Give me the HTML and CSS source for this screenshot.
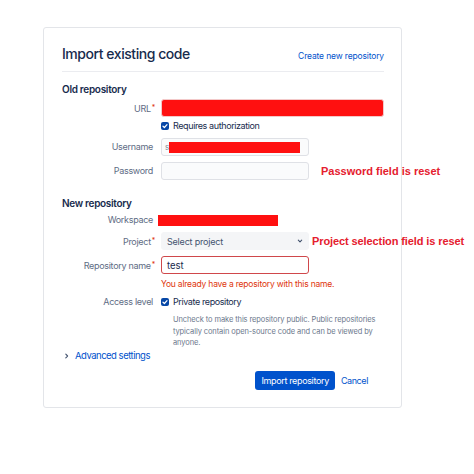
FILE: index.html
```html
<!DOCTYPE html>
<html lang="en">
<head>
<meta charset="utf-8">
<title>Import existing code</title>
<link rel="stylesheet" href="styles.css">
</head>
<body>
<div class="card">
  <div class="header">
    <h1 class="title">Import existing code</h1>
    <a class="link create">Create new repository</a>
  </div>

  <div class="section-title first">Old repository</div>

  <div class="row r-url">
    <div class="label">URL<span class="req">*</span></div>
    <div class="field"><div class="input full redacted"></div></div>
  </div>

  <div class="row r-auth">
    <div class="label"></div>
    <div class="field">
      <span class="cb"><svg viewBox="0 0 8 8" width="8" height="8"><path d="M2 4.2 L3.4 5.5 L6 2.6" fill="none" stroke="#fff" stroke-width="1.2" stroke-linecap="round" stroke-linejoin="round"/></svg></span>
      <span class="cbtext">Requires authorization</span>
    </div>
  </div>

  <div class="row r-user">
    <div class="label plain">Username</div>
    <div class="field"><div class="input mid"><span class="ghost">s</span><span class="redbar user-bar"></span></div></div>
  </div>

  <div class="row r-pass">
    <div class="label plain">Password</div>
    <div class="field"><div class="input mid"></div><span class="note note-pass">Password field is reset</span></div>
  </div>

  <div class="section-title second">New repository</div>

  <div class="row r-ws">
    <div class="label plain">Workspace</div>
    <div class="field"><span class="redbar ws-bar"></span></div>
  </div>

  <div class="row r-proj">
    <div class="label">Project<span class="req">*</span></div>
    <div class="field">
      <div class="input mid select"><span class="seltext">Select project</span><svg class="chev" viewBox="0 0 8 8" width="8" height="8"><path d="M2.3 3.2 L4 4.9 L5.7 3.2" fill="none" stroke="#42526e" stroke-width="1.1" stroke-linecap="round" stroke-linejoin="round"/></svg></div>
      <span class="note note-proj">Project selection field is reset</span>
    </div>
  </div>

  <div class="row r-name">
    <div class="label">Repository name<span class="req">*</span></div>
    <div class="field"><div class="input mid error"><span class="val">test</span></div></div>
  </div>

  <div class="row r-err">
    <div class="label"></div>
    <div class="field"><span class="errtext">You already have a repository with this name.</span></div>
  </div>

  <div class="row r-access">
    <div class="label plain">Access level</div>
    <div class="field">
      <span class="cb"><svg viewBox="0 0 8 8" width="8" height="8"><path d="M2 4.2 L3.4 5.5 L6 2.6" fill="none" stroke="#fff" stroke-width="1.2" stroke-linecap="round" stroke-linejoin="round"/></svg></span>
      <span class="cbtext">Private repository</span>
    </div>
  </div>

  <div class="row r-help">
    <div class="label"></div>
    <div class="field"><p class="help">Uncheck to make this repository public. Public repositories typically contain open-source code and can be viewed by anyone.</p></div>
  </div>

  <div class="advanced">
    <svg class="adv-chev" viewBox="0 0 6 8" width="6" height="8"><path d="M1.8 2.2 L3.6 4 L1.8 5.8" fill="none" stroke="#42526e" stroke-width="1.1" stroke-linecap="round" stroke-linejoin="round"/></svg>
    <a class="link adv-link">Advanced settings</a>
  </div>

  <div class="actions">
    <button class="btn primary">Import repository</button>
    <a class="link cancel">Cancel</a>
  </div>
</div>
</body>
</html>
```

FILE: styles.css
```css
* { box-sizing: border-box; }
html, body { margin: 0; padding: 0; background: #fff; }
body {
  font-family: Inter, "Liberation Sans", Arial, sans-serif;
  color: #172b4d;
  width: 474px;
  height: 474px;
  overflow: hidden;
}
.card {
  margin: 27px 0 0 43px;
  width: 359px;
  height: 381px;
  border: 1px solid #e3e5e9;
  border-radius: 3px;
  padding: 16px 17px 0 18px;
}
.header {
  display: flex;
  align-items: flex-end;
  justify-content: space-between;
  border-bottom: 1px solid #ebecf0;
  padding-bottom: 7px;
}
.title {
  margin: 0;
  font-size: 14px;
  font-weight: 500;
  line-height: 20px;
  letter-spacing: -0.45px;
}
.link {
  color: #0052cc;
  text-decoration: none;
  cursor: pointer;
}
.create {
  font-size: 8.5px;
  line-height: 12px;
  letter-spacing: -0.15px;
  margin-bottom: 2px;
}
.section-title {
  font-size: 10px;
  font-weight: 600;
  line-height: 14px;
  letter-spacing: -0.3px;
}
.section-title.first { margin-top: 10px; }
.section-title.second { margin-top: 16px; }
.row {
  display: grid;
  grid-template-columns: 93px 1fr;
  column-gap: 6px;
  align-items: center;
}
.label {
  text-align: right;
  font-size: 9px;
  line-height: 12px;
  letter-spacing: -0.3px;
  color: #5e6c84;
}
.label.plain { padding-right: 2px; }
.req { color: #de350b; font-size: 7px; margin-left: 1px; vertical-align: 2px; }
.field {
  display: flex;
  align-items: center;
  white-space: nowrap;
}
.input {
  height: 18px;
  border: 1px solid #dfe1e6;
  background: #fafbfc;
  border-radius: 3px;
  display: flex;
  align-items: center;
  padding: 0 5px;
  font-size: 9.5px;
}
.input.full { width: 223px; }
.input.mid { width: 148px; }
.input.redacted { background: #ff1010; border-color: #f3c9c9; }
.ghost { color: #8a8f99; font-size: 8px; margin-left: -2px; }
.redbar { display: block; background: #ff1010; }
.user-bar { width: 131px; height: 11px; margin-left: 0; }
.ws-bar { width: 120px; height: 11px; margin-left: -3px; }
.select { background: #f4f5f7; border-color: #f4f5f7; justify-content: space-between; }
.seltext { color: #42526e; font-size: 9px; letter-spacing: -0.2px; }
.chev { margin-right: -1px; }
.error { border-color: #d0484b; background: #fff; }
.val { color: #172b4d; font-size: 9.5px; }
.note {
  font-family: "Liberation Sans", Arial, sans-serif;
  font-weight: bold;
  color: #e5202e;
  font-size: 11px;
}
.note-pass { margin-left: 12px; }
.note-proj { margin-left: 3px; letter-spacing: -0.1px; }
.cb {
  width: 8px;
  height: 8px;
  border-radius: 2px;
  background: #0747a6;
  display: inline-flex;
  margin-right: 4px;
}
.cb svg { display: block; }
.cbtext { font-size: 9px; line-height: 14px; color: #172b4d; letter-spacing: -0.4px; }
.errtext { font-size: 8.5px; line-height: 12px; color: #de350b; letter-spacing: -0.2px; }
.help {
  margin: 0;
  padding-left: 12px;
  font-size: 7.5px;
  line-height: 11.5px;
  letter-spacing: -0.1px;
  color: #6b778c;
  white-space: normal;
  width: 222px;
}
.r-url { margin-top: 3px; }
.r-auth { margin-top: 2px; height: 14px; }
.r-user { margin-top: 5px; }
.r-pass { margin-top: 6px; }
.r-ws { margin-top: 3px; height: 14px; }
.r-proj { margin-top: 5px; }
.r-name { margin-top: 6px; }
.r-err { margin-top: 4px; }
.r-access { margin-top: 5px; height: 14px; }
.r-help { margin-top: 5px; }
.advanced {
  display: flex;
  align-items: center;
  margin-top: 0;
  padding-left: 2px;
  height: 14px;
}
.adv-chev { margin-right: 5px; }
.adv-link { font-size: 9.5px; letter-spacing: -0.5px; }
.actions {
  display: flex;
  justify-content: flex-end;
  align-items: center;
  margin-top: 8px;
  padding-right: 16px;
}
.btn {
  font-family: inherit;
  border: none;
  border-radius: 3px;
  height: 19px;
  padding: 0 6px;
  font-size: 9px;
  letter-spacing: -0.35px;
}
.primary { background: #0052cc; color: #fff; }
.cancel { font-size: 9px; margin-left: 6px; letter-spacing: -0.4px; }
```
